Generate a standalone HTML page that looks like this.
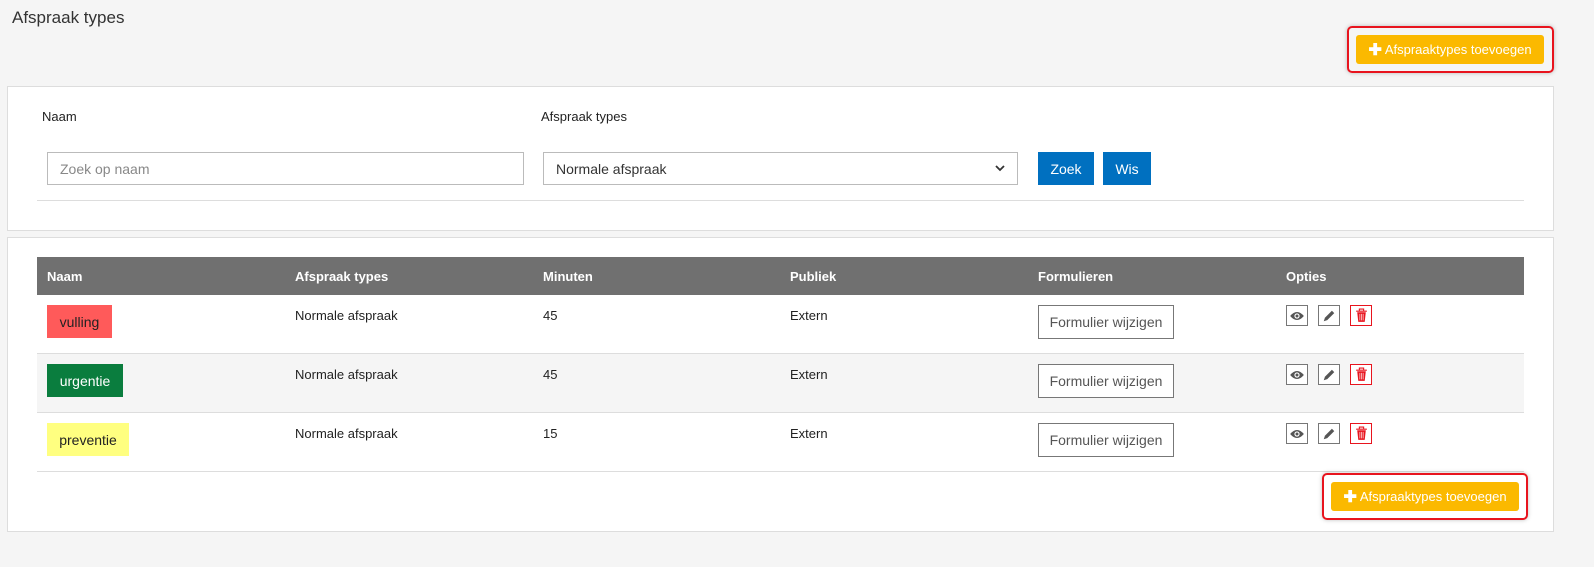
<!DOCTYPE html>
<html><head><meta charset="utf-8"><style>
*{box-sizing:border-box;margin:0;padding:0}
body{width:1594px;height:567px;background:#f5f5f5;font-family:"Liberation Sans",Arial,sans-serif;color:#222;position:relative;overflow:hidden;font-size:13px}
.abs{position:absolute}
.title{left:12px;top:8px;font-size:17px;color:#333}
.hl{border:2px solid #e8141e;border-radius:5px;box-shadow:0 0 4px rgba(0,0,0,.25)}
.ybtn{background:#fbb900;color:#fff;border-radius:3px;font-size:13px;display:flex;align-items:center;justify-content:center;gap:3px}
.panel{background:#fff;border:1px solid #ddd}
.lbl{font-size:13px;color:#222}
.inp{border:1px solid #bbb;background:#fff;font-size:14px;color:#666;padding:0 12px;display:flex;align-items:center}
.bbtn{background:#0070c0;color:#fff;font-size:14px;display:flex;align-items:center;justify-content:center}
.th{color:#fff;font-weight:bold;font-size:13px;top:269px}
.cell{font-size:13px;color:#222}
.tag{font-size:14px;display:flex;align-items:center;justify-content:center}
.fb{border:1px solid #777;background:#fff;color:#555;font-size:14px;display:flex;align-items:center;justify-content:center;width:136px;height:34px}
.ic{width:22px;height:21px;border:1px solid #777;display:flex;align-items:center;justify-content:center;background:#fff}
.ic.r{border-color:#e8141e}
</style></head><body>
<div class="abs title">Afspraak types</div>
<div class="abs hl" style="left:1347px;top:26px;width:207px;height:47px"></div>
<div class="abs ybtn" style="left:1356px;top:35px;width:188px;height:29px"><b style="font-size:16px">✚</b>Afspraaktypes toevoegen</div>

<div class="abs panel" style="left:7px;top:86px;width:1547px;height:145px"></div>
<div class="abs lbl" style="left:42px;top:109px">Naam</div>
<div class="abs lbl" style="left:541px;top:109px">Afspraak types</div>
<div class="abs inp" style="left:47px;top:152px;width:477px;height:33px;color:#888">Zoek op naam</div>
<div class="abs inp" style="left:543px;top:152px;width:475px;height:33px;color:#333;justify-content:space-between">Normale afspraak<svg width="10" height="7" viewBox="0 0 10 7"><path d="M1 1l4 4 4-4" stroke="#333" stroke-width="1.8" fill="none"/></svg></div>
<div class="abs bbtn" style="left:1038px;top:152px;width:56px;height:33px">Zoek</div>
<div class="abs bbtn" style="left:1103px;top:152px;width:48px;height:33px">Wis</div>
<div class="abs" style="left:37px;top:200px;width:1487px;height:1px;background:#ddd"></div>

<div class="abs panel" style="left:7px;top:237px;width:1547px;height:295px"></div>
<div class="abs" style="left:37px;top:257px;width:1487px;height:38px;background:#707070"></div>
<div class="abs th" style="left:47px">Naam</div>
<div class="abs th" style="left:295px">Afspraak types</div>
<div class="abs th" style="left:543px">Minuten</div>
<div class="abs th" style="left:790px">Publiek</div>
<div class="abs th" style="left:1038px">Formulieren</div>
<div class="abs th" style="left:1286px">Opties</div>

<div class="abs" style="left:37px;top:353px;width:1487px;height:59px;background:#f5f5f5"></div>
<div class="abs" style="left:37px;top:353px;width:1487px;height:1px;background:#ddd"></div>
<div class="abs" style="left:37px;top:412px;width:1487px;height:1px;background:#ddd"></div>
<div class="abs" style="left:37px;top:471px;width:1487px;height:1px;background:#ddd"></div>

<div class="abs tag" style="left:47px;top:305px;width:65px;height:33px;background:#ff5a5a;color:#222">vulling</div>
<div class="abs tag" style="left:47px;top:364px;width:76px;height:33px;background:#0a7d3e;color:#fff">urgentie</div>
<div class="abs tag" style="left:47px;top:423px;width:82px;height:33px;background:#ffff80;color:#222">preventie</div>

<div class="abs cell" style="left:295px;top:308px">Normale afspraak</div>
<div class="abs cell" style="left:295px;top:367px">Normale afspraak</div>
<div class="abs cell" style="left:295px;top:426px">Normale afspraak</div>
<div class="abs cell" style="left:543px;top:308px">45</div>
<div class="abs cell" style="left:543px;top:367px">45</div>
<div class="abs cell" style="left:543px;top:426px">15</div>
<div class="abs cell" style="left:790px;top:308px">Extern</div>
<div class="abs cell" style="left:790px;top:367px">Extern</div>
<div class="abs cell" style="left:790px;top:426px">Extern</div>
<div class="abs fb" style="left:1038px;top:305px">Formulier wijzigen</div>
<div class="abs fb" style="left:1038px;top:364px">Formulier wijzigen</div>
<div class="abs fb" style="left:1038px;top:423px">Formulier wijzigen</div>

<div class="abs" style="left:1286px;top:305px;display:flex;gap:10px">
<div class="ic"><svg width="16" height="12" viewBox="0 0 14 10"><path d="M1 5Q7-2 13 5Q7 12 1 5Z" fill="#555"/><circle cx="7" cy="5" r="2.3" fill="#fff"/><circle cx="7" cy="5" r="1.3" fill="#555"/></svg></div>
<div class="ic"><svg width="14" height="14" viewBox="0 0 12 12"><path d="M1.5 10.5l1-3 6-6 2 2-6 6z" fill="#555"/></svg></div>
<div class="ic r"><svg width="13" height="15" viewBox="0 0 12 14"><path d="M1 3h10M4 3V1h4v2" stroke="#e8141e" fill="none"/><path d="M2 4h8l-1 9H3z" fill="#e8141e"/><path d="M4.5 5.5v6M6 5.5v6M7.5 5.5v6" stroke="#fff" stroke-width=".6"/></svg></div>
</div>
<div class="abs" style="left:1286px;top:364px;display:flex;gap:10px">
<div class="ic"><svg width="16" height="12" viewBox="0 0 14 10"><path d="M1 5Q7-2 13 5Q7 12 1 5Z" fill="#555"/><circle cx="7" cy="5" r="2.3" fill="#fff"/><circle cx="7" cy="5" r="1.3" fill="#555"/></svg></div>
<div class="ic"><svg width="14" height="14" viewBox="0 0 12 12"><path d="M1.5 10.5l1-3 6-6 2 2-6 6z" fill="#555"/></svg></div>
<div class="ic r"><svg width="13" height="15" viewBox="0 0 12 14"><path d="M1 3h10M4 3V1h4v2" stroke="#e8141e" fill="none"/><path d="M2 4h8l-1 9H3z" fill="#e8141e"/><path d="M4.5 5.5v6M6 5.5v6M7.5 5.5v6" stroke="#fff" stroke-width=".6"/></svg></div>
</div>
<div class="abs" style="left:1286px;top:423px;display:flex;gap:10px">
<div class="ic"><svg width="16" height="12" viewBox="0 0 14 10"><path d="M1 5Q7-2 13 5Q7 12 1 5Z" fill="#555"/><circle cx="7" cy="5" r="2.3" fill="#fff"/><circle cx="7" cy="5" r="1.3" fill="#555"/></svg></div>
<div class="ic"><svg width="14" height="14" viewBox="0 0 12 12"><path d="M1.5 10.5l1-3 6-6 2 2-6 6z" fill="#555"/></svg></div>
<div class="ic r"><svg width="13" height="15" viewBox="0 0 12 14"><path d="M1 3h10M4 3V1h4v2" stroke="#e8141e" fill="none"/><path d="M2 4h8l-1 9H3z" fill="#e8141e"/><path d="M4.5 5.5v6M6 5.5v6M7.5 5.5v6" stroke="#fff" stroke-width=".6"/></svg></div>
</div>

<div class="abs hl" style="left:1322px;top:473px;width:206px;height:47px"></div>
<div class="abs ybtn" style="left:1331px;top:482px;width:188px;height:29px"><b style="font-size:16px">✚</b>Afspraaktypes toevoegen</div>
</body></html>
